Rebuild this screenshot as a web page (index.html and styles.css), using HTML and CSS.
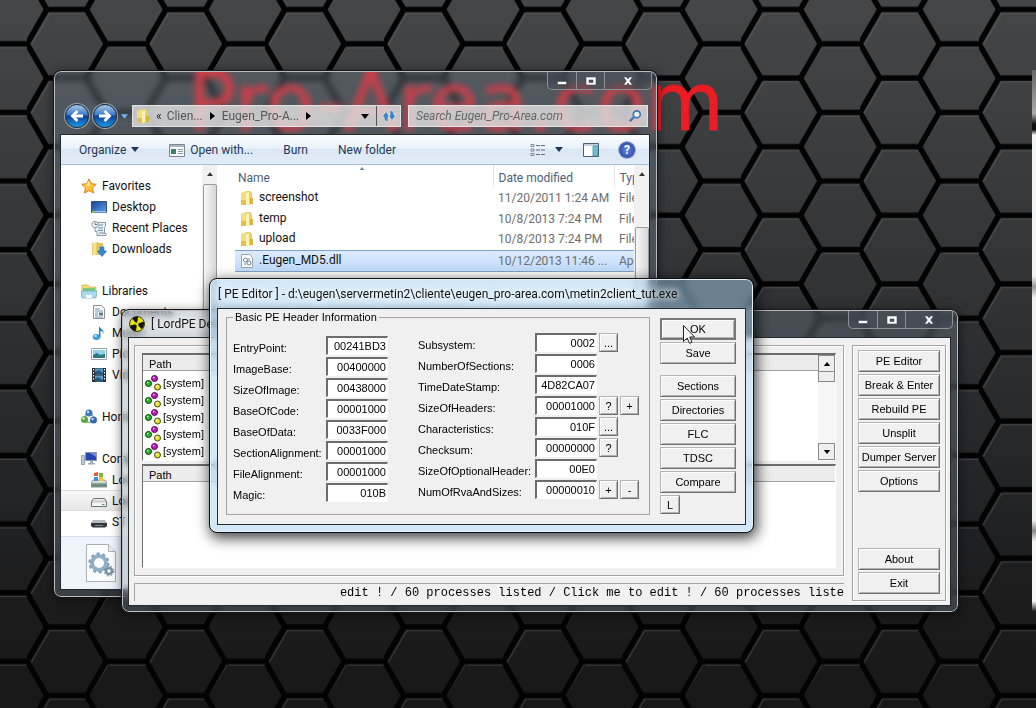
FILE: index.html
```html
<!doctype html>
<html lang="en">
  <head>
    <meta charset="UTF-8" />
    <meta name="viewport" content="width=device-width, initial-scale=1.0" />
    <title>Desktop</title>
    <link rel="stylesheet" href="styles.css">
  </head>
  <body>
    <!-- Icon definitions -->
    <svg class="defs" aria-hidden="true">
      <defs>
        <linearGradient id="gold" x1="0" x2="1"><stop offset="0" stop-color="#e8c95a" /><stop offset=".45" stop-color="#fbeb9c" /><stop offset="1" stop-color="#dcb945" /></linearGradient>
        <linearGradient id="metal" x1="0" x2="0" y1="0" y2="1"><stop offset="0" stop-color="#f4f4f4" /><stop offset="1" stop-color="#8d9296" /></linearGradient>
        <linearGradient id="sky" x1="0" x2="1" y1="0" y2="1"><stop offset="0" stop-color="#1c3f9c" /><stop offset="1" stop-color="#5aa4e6" /></linearGradient>
      </defs>
      <symbol id="folder" viewBox="0 0 16 16">
        <path d="M2 3l5-2v12l-5 2z" fill="#f3dd7c" />
        <path d="M7 1h4l2 2v11l-6 1z" fill="#e9cf6a" />
        <path d="M7 3l3-1v12l-3 1z" fill="#fdf3b4" />
        <path d="M2 10h5v5H2z" fill="#e3c04e" />
        <path d="M11 8h3v6h-3z" fill="#d9b540" />
      </symbol>
      <symbol id="dll" viewBox="0 0 16 16">
        <path d="M2.500 1.500h8l3 3v10h-11z" fill="#fff" stroke="#9aa3ab" />
        <g fill="none" stroke="#5f7f9a"><circle cx="6.500" cy="7" r="2" /><circle cx="10" cy="10" r="2" /><path d="M5 11h2M9 6h2" /></g>
      </symbol>
      <symbol id="star" viewBox="0 0 16 16">
        <path d="M8 1l2.200 4.700 5 .6-3.700 3.500 1 5.200L8 12.500 3.500 15l1-5.200L.8 6.300l5-.6z" fill="#ffc23c" stroke="#e07c16" />
        <path d="M8 3l1.300 3.500L8 8 5 7z" fill="#fff0a8" />
      </symbol>
      <symbol id="screen" viewBox="0 0 16 16">
        <path d="M.5 2.500h15v11H.5z" fill="url(#sky)" stroke="#36507c" />
        <path d="M1 12h14v1.500H1z" fill="#9cc6ee" /><path d="M1 12h3v1.500H1z" fill="#8fd25a" />
      </symbol>
      <symbol id="recent" viewBox="0 0 16 16">
        <path d="M5.500 2.500h9v4l-1 1v6H15v2H6v-4H4v-4h1.500z" fill="#e9eff4" stroke="#8899a8" />
        <path d="M7 5h5M7 8h5M7 10.500h5M8 13h5" stroke="#6f8fae" />
        <circle cx="4" cy="4.500" r="3.200" fill="#f7f9fb" stroke="#8b97a3" /><path d="M4 2.500v2h2" fill="none" stroke="#5c6b7a" />
      </symbol>
      <symbol id="download" viewBox="0 0 16 16">
        <path d="M1 2l6-1v13H1z" fill="url(#gold)" /><path d="M7 2h5v12H7z" fill="#e0c258" />
        <path d="M9 6h4v4h2.500L11 15.500 6.500 10H9z" fill="#2f8bd8" stroke="#1767ad" stroke-width=".6" />
      </symbol>
      <symbol id="library" viewBox="0 0 16 16">
        <path d="M1 2h6l1 2h7v9H1z" fill="#f1d97c" stroke="#c6a648" stroke-width=".6" />
        <path d="M2 5h12v4H2z" fill="#7cc87a" /><path d="M0 8h16l-1 7H1z" fill="#a9d8ef" stroke="#62a3c4" stroke-width=".6" />
        <path d="M5 15v-3h6v3z" fill="#f8fcff" />
      </symbol>
      <symbol id="document" viewBox="0 0 16 16">
        <path d="M2.500 1.500h8l3 3v10h-11z" fill="#fdfdfd" stroke="#8a8f94" />
        <path d="M4 5h5M4 7h8M4 9h3M4 11h3M4 13h8" stroke="#7894ad" /><path d="M8 8.500h4v3H8z" fill="#5f7c94" />
      </symbol>
      <symbol id="music" viewBox="0 0 16 16">
        <ellipse cx="5.500" cy="12" rx="3.800" ry="3" fill="#3c9cdc" /><path d="M8 12V1c1 3 5 3 4.500 8C12 6.500 10 6 9.500 6v6z" fill="#2684c9" />
        <ellipse cx="4.500" cy="11" rx="1.500" ry="1" fill="#bfe4fa" />
      </symbol>
      <symbol id="picture" viewBox="0 0 16 16">
        <path d="M.5 2.500h15v11H.5z" fill="#fff" stroke="#9aa3ab" /><path d="M2 4h12v8H2z" fill="#8fd0ea" />
        <path d="M2 9l4-2 3 2 5-1v4H2z" fill="#2c7782" />
      </symbol>
      <symbol id="video" viewBox="0 0 16 16">
        <path d="M1 1h14v14H1z" fill="#2b3136" /><path d="M4 1.500h8v6H4zM4 8.500h8v6H4z" fill="#5c9ccb" />
        <path d="M4 5l4-2 4 3v1.500H4zM4 12l3-2 5 3v1.500H4z" fill="#27587b" />
        <path d="M2.500 2v12M13.500 2v12" stroke="#fff" stroke-dasharray="1.500 1.500" />
      </symbol>
      <symbol id="homegroup" viewBox="0 0 16 16">
        <circle cx="8" cy="9" r="4.500" fill="none" stroke="#8ec66c" stroke-width="1.500" />
        <circle cx="8" cy="4" r="3.500" fill="#3d74c4" /><circle cx="3.500" cy="10.500" r="3.500" fill="#5ba33f" /><circle cx="12.500" cy="11" r="3.500" fill="#3568b8" />
        <circle cx="7" cy="3" r="1.200" fill="#cfe4fb" /><circle cx="2.500" cy="9.500" r="1.200" fill="#dff3cf" /><circle cx="11.500" cy="10" r="1.200" fill="#cfe4fb" />
      </symbol>
      <symbol id="computer" viewBox="0 0 16 16">
        <path d="M4.500 1.500h11v8h-11z" fill="#2843b5" stroke="#8b97a3" /><path d="M9 2h6v4z" fill="#6e8be4" />
        <path d="M9 10h3v2h2v1.500H7V12h2z" fill="#a4acb4" /><path d="M.5 4.500h3v9h-3z" fill="#c3cad2" stroke="#7d8790" stroke-width=".7" />
      </symbol>
      <symbol id="osdrive" viewBox="0 0 16 16">
        <path d="M2 8h12l2 3v4H0v-4z" fill="url(#metal)" stroke="#5d6f6a" stroke-width=".7" /><path d="M1 11.500h14v2.500H1z" fill="#68907c" />
        <path d="M3 1l4-1v4H3z" fill="#e25b2e" /><path d="M8 1h4v4H8z" fill="#7fb83c" /><path d="M3 5h4v4H3z" fill="#3f90d2" /><path d="M8 5h4v4H8z" fill="#f3c43a" />
      </symbol>
      <symbol id="drive" viewBox="0 0 16 16">
        <path d="M2.500 5.500h11l2 3.500v4.500H.5V9z" fill="url(#metal)" stroke="#6d7276" /><path d="M1 9.500h14v3.500H1z" fill="#f4f5f5" /><path d="M11 11h2.500v1H11z" fill="#4f9c3a" />
      </symbol>
      <symbol id="usb" viewBox="0 0 16 16">
        <path d="M2 6h12l2 3H0z" fill="#b5b9bc" /><path d="M0 9h16v3l-2 1.500H2L0 12z" fill="#33373a" /><path d="M4 11h8v1H4z" fill="#85898c" />
      </symbol>
      <symbol id="radiation" viewBox="0 0 16 16">
        <circle cx="8" cy="8" r="7.500" fill="#e6e11c" stroke="#3b3a0c" />
        <path d="M8 8L3 2.500A7 7 0 0 1 9 1zM8 8l6.700-2.500A7 7 0 0 1 12.500 13zM8 8l-1 7a7 7 0 0 1-6-5.500z" fill="#141404" />
        <circle cx="8" cy="8" r="1.500" fill="#e6e11c" />
      </symbol>
      <symbol id="process" viewBox="0 0 16 16">
        <circle cx="9.500" cy="3.500" r="3" fill="#c018c0" stroke="#4a064a" /><circle cx="3.500" cy="8.500" r="3" fill="#28b428" stroke="#083c08" /><circle cx="12.500" cy="12" r="3" fill="#e4e02c" stroke="#4b4a08" />
        <g fill="#fff"><circle cx="8.700" cy="2.600" r=".8" /><circle cx="2.700" cy="7.600" r=".8" /><circle cx="11.700" cy="11" r=".8" /></g>
      </symbol>
      <symbol id="min" viewBox="0 0 12 10"><path d="M1.500 5.500h9v3h-9z" fill="#fff" stroke="#444b52" stroke-width=".6" /></symbol>
      <symbol id="max" viewBox="0 0 12 10"><path d="M1 1h10v8H1zM4 4v2.500h4V4z" fill="#fff" fill-rule="evenodd" stroke="#444b52" stroke-width=".6" /></symbol>
      <symbol id="close" viewBox="0 0 12 10"><path d="M1.500 1h3L6 3l1.500-2h3L7.700 5l2.800 4h-3L6 7 4.500 9h-3l2.800-4z" fill="#fff" stroke="#444b52" stroke-width=".6" /></symbol>
      <symbol id="down" viewBox="0 0 8 5"><path d="M0 0h8L4 5z" fill="currentColor" /></symbol>
      <symbol id="up" viewBox="0 0 8 5"><path d="M0 5h8L4 0z" fill="currentColor" /></symbol>
      <symbol id="right" viewBox="0 0 5 8"><path d="M0 0v8l5-4z" fill="currentColor" /></symbol>
    </svg>

    <main class="desktop">
      <svg class="wallpaper" aria-hidden="true">
        <defs>
          <pattern id="honeycomb" x="27" y="9.500" width="119" height="68.600" patternUnits="userSpaceOnUse">
            <path d="M3.300 34.300L21.800 2.800H58M82 37.300h35M62 66l18-29" transform="translate(1 1)" fill="none" stroke="#707274" stroke-opacity=".4" />
            <path d="M0 34.300L19.800 0H59.500L79.300 34.300H119M79.300 34.300L59.500 68.600H19.800L0 34.300M19.800 68.600H59.500" fill="none" stroke="#030303" stroke-width="5.500" />
          </pattern>
        </defs>
        <rect width="100%" height="100%" fill="url(#honeycomb)" />
      </svg>
      <p class="watermark">Pro-Area.com</p>
      <div class="edge"></div>

      <section class="window explorer">
        <div class="caption-buttons">
          <button type="button" aria-label="Minimize"><svg><use href="#min" /></svg></button>
          <button type="button" aria-label="Maximize"><svg><use href="#max" /></svg></button>
          <button type="button" class="close" aria-label="Close"><svg><use href="#close" /></svg></button>
        </div>

        <div class="address-row">
          <button type="button" class="nav" aria-label="Back"><svg viewBox="0 0 16 16"><path d="M8.500 3L3.500 8l5 5M4 8h10" fill="none" stroke="#fff" stroke-width="2.800" /></svg></button>
          <button type="button" class="nav" aria-label="Forward"><svg viewBox="0 0 16 16"><path d="M7.500 3l5 5-5 5M12 8H2" fill="none" stroke="#fff" stroke-width="2.800" /></svg></button>
          <button type="button" class="history" aria-label="Recent pages"><svg><use href="#down" /></svg></button>
          <div class="address">
            <svg class="icon"><use href="#folder" /></svg>
            <span class="more">«</span>
            <a href="#">Clien...</a>
            <svg class="crumb"><use href="#right" /></svg>
            <a href="#">Eugen_Pro-A...</a>
            <svg class="crumb"><use href="#right" /></svg>
            <svg class="arrow"><use href="#down" /></svg>
            <button type="button" class="refresh" aria-label="Refresh">
              <svg viewBox="0 0 16 16"><path d="M7 14V9h2L5 3.500 1 9h2c0 3 1 4 4 5zM9 2v5H7l4 5.500L15 7h-2c0-3-1-4-4-5z" fill="#3f83bd" stroke="#e9f3fb" stroke-width=".6" /></svg>
            </button>
          </div>
          <div class="search">
            <input type="text" aria-label="Search" placeholder="Search Eugen_Pro-Area.com" />
            <svg viewBox="0 0 16 16"><circle cx="10" cy="6" r="4" fill="#e8f2fa" stroke="#3a78b4" stroke-width="2" /><path d="M7 9l-5 5" stroke="#3a78b4" stroke-width="2.500" /></svg>
          </div>
        </div>

        <div class="client">
          <div class="toolbar">
            <button type="button">Organize <svg class="arrow"><use href="#down" /></svg></button>
            <button type="button">
              <svg class="icon" viewBox="0 0 16 16"><path d="M.5 2.500h15v12H.5z" fill="#f6f8fa" stroke="#7b8791" /><path d="M1 3h14v2H1z" fill="#aab6c1" /><path d="M2 7h5v5H2z" fill="#3f7f6d" /><path d="M9 7.500h5M9 9.500h5M9 11.500h5" stroke="#8d98a2" /></svg>
              Open with...
            </button>
            <button type="button">Burn</button>
            <button type="button">New folder</button>
            <span class="spacer"></span>
            <button type="button" aria-label="Change your view">
              <svg class="icon" viewBox="0 0 16 16"><path d="M1 2.500h3v2H1zM1 7h3v2H1zM1 11.500h3v2H1z" fill="#fff" stroke="#7b8791" /><path d="M6 3.500h4M11 3.500h4M6 8h4M11 8h4M6 12.500h4M11 12.500h4" stroke="#5e6f80" /></svg>
              <svg class="arrow"><use href="#down" /></svg>
            </button>
            <button type="button" aria-label="Preview pane">
              <svg class="icon" viewBox="0 0 16 16"><path d="M.5 1.500h15v13H.5z" fill="#fff" stroke="#4c5f73" /><path d="M1 2h14v2H1z" fill="#c2d2e2" /><path d="M10 4h5v10h-5z" fill="#6cc3cf" stroke="#3b8492" stroke-width=".7" /></svg>
            </button>
            <button type="button" class="help" aria-label="Help">?</button>
          </div>

          <div class="panes">
            <nav class="tree">
              <ul>
                <li><a href="#" class="root"><svg class="icon"><use href="#star" /></svg>Favorites</a></li>
                <li><a href="#"><svg class="icon"><use href="#screen" /></svg>Desktop</a></li>
                <li><a href="#"><svg class="icon"><use href="#recent" /></svg>Recent Places</a></li>
                <li><a href="#"><svg class="icon"><use href="#download" /></svg>Downloads</a></li>
              </ul>
              <ul>
                <li><a href="#" class="root"><svg class="icon"><use href="#library" /></svg>Libraries</a></li>
                <li><a href="#"><svg class="icon"><use href="#document" /></svg>Documents</a></li>
                <li><a href="#"><svg class="icon"><use href="#music" /></svg>Music</a></li>
                <li><a href="#"><svg class="icon"><use href="#picture" /></svg>Pictures</a></li>
                <li><a href="#"><svg class="icon"><use href="#video" /></svg>Videos</a></li>
              </ul>
              <ul>
                <li><a href="#" class="root"><svg class="icon"><use href="#homegroup" /></svg>Homegroup</a></li>
              </ul>
              <ul>
                <li><a href="#" class="root"><svg class="icon"><use href="#computer" /></svg>Computer</a></li>
                <li><a href="#"><svg class="icon"><use href="#osdrive" /></svg>Local Disk</a></li>
                <li><a href="#" class="current"><svg class="icon"><use href="#drive" /></svg>Local Disk</a></li>
                <li><a href="#"><svg class="icon"><use href="#usb" /></svg>ST</a></li>
              </ul>
            </nav>
            <div class="scroll tree-scroll"><svg><use href="#up" /></svg><i></i></div>
            <div class="files">
              <svg class="sort"><use href="#up" /></svg>
              <table>
                <thead>
                  <tr><th class="name">Name</th><th class="date">Date modified</th><th>Type</th></tr>
                </thead>
                <tbody>
                  <tr><td><svg class="icon"><use href="#folder" /></svg>screenshot</td><td>11/20/2011 1:24 AM</td><td>File folder</td></tr>
                  <tr><td><svg class="icon"><use href="#folder" /></svg>temp</td><td>10/8/2013 7:24 PM</td><td>File folder</td></tr>
                  <tr><td><svg class="icon"><use href="#folder" /></svg>upload</td><td>10/8/2013 7:24 PM</td><td>File folder</td></tr>
                  <tr class="selected"><td><svg class="icon"><use href="#dll" /></svg>.Eugen_MD5.dll</td><td>10/12/2013 11:46 ...</td><td>Application</td></tr>
                </tbody>
              </table>
            </div>
            <div class="scroll files-scroll"><svg><use href="#up" /></svg><i></i></div>
          </div>

          <div class="details">
            <svg viewBox="0 0 32 40">
              <path d="M1.500 1.500h22l7 7v30h-29z" fill="#fbfcfd" stroke="#a9b0b6" /><path d="M23.500 1.500v7h7" fill="#e8ecef" stroke="#a9b0b6" />
              <circle cx="14" cy="20" r="7" fill="none" stroke="#8fb0c6" stroke-width="4" /><circle cx="14" cy="20" r="9.500" fill="none" stroke="#7d9ab0" stroke-width="2" stroke-dasharray="3 3" />
              <circle cx="24" cy="28" r="3" fill="none" stroke="#76909f" stroke-width="2.500" /><circle cx="24" cy="28" r="5" fill="none" stroke="#6f8798" stroke-dasharray="2 2" />
            </svg>
          </div>
        </div>
      </section>

      <section class="window lordpe">
        <div class="caption-buttons">
          <button type="button" aria-label="Minimize"><svg><use href="#min" /></svg></button>
          <button type="button" aria-label="Maximize"><svg><use href="#max" /></svg></button>
          <button type="button" class="close" aria-label="Close"><svg><use href="#close" /></svg></button>
        </div>
        <h2 class="title"><svg class="icon"><use href="#radiation" /></svg>[ LordPE Deluxe ]</h2>
        <div class="client">
          <div class="main">
            <div class="group lists">
              <div class="list processes">
                <div class="rows">
                  <div class="head">Path</div>
                  <ul>
                    <li><svg><use href="#process" /></svg>[system]</li>
                    <li><svg><use href="#process" /></svg>[system]</li>
                    <li><svg><use href="#process" /></svg>[system]</li>
                    <li><svg><use href="#process" /></svg>[system]</li>
                    <li><svg><use href="#process" /></svg>[system]</li>
                  </ul>
                </div>
                <div class="classic-scroll">
                  <button type="button" aria-label="Scroll up"><svg><use href="#up" /></svg></button>
                  <i></i>
                  <button type="button" aria-label="Scroll down"><svg><use href="#down" /></svg></button>
                </div>
              </div>
              <div class="list modules"><div class="rows"><div class="head">Path</div></div></div>
            </div>
            <div class="ticker"><span>edit ! / 60 processes listed / Click me to edit ! / 60 processes liste</span></div>
          </div>
          <div class="group actions">
            <button type="button">PE Editor</button>
            <button type="button">Break &amp; Enter</button>
            <button type="button">Rebuild PE</button>
            <button type="button">Unsplit</button>
            <button type="button">Dumper Server</button>
            <button type="button">Options</button>
            <span class="spacer"></span>
            <button type="button">About</button>
            <button type="button">Exit</button>
          </div>
        </div>
      </section>

      <section class="window editor">
        <h2 class="title">[ PE Editor ] - d:\eugen\servermetin2\cliente\eugen_pro-area.com\metin2client_tut.exe</h2>
        <form class="client">
          <fieldset>
            <legend>Basic PE Header Information</legend>
            <div class="fields left">
              <label for="entry">EntryPoint:</label><input id="entry" type="text" value="00241BD3" />
              <label for="base">ImageBase:</label><input id="base" type="text" value="00400000" />
              <label for="size">SizeOfImage:</label><input id="size" type="text" value="00438000" />
              <label for="code">BaseOfCode:</label><input id="code" type="text" value="00001000" />
              <label for="data">BaseOfData:</label><input id="data" type="text" value="0033F000" />
              <label for="salign">SectionAlignment:</label><input id="salign" type="text" value="00001000" />
              <label for="falign">FileAlignment:</label><input id="falign" type="text" value="00001000" />
              <label for="magic">Magic:</label><input id="magic" type="text" value="010B" />
            </div>
            <div class="fields right">
              <label for="subsystem">Subsystem:</label><div><input id="subsystem" type="text" value="0002" /><button type="button">...</button></div>
              <label for="sections">NumberOfSections:</label><div><input id="sections" type="text" value="0006" /></div>
              <label for="stamp">TimeDateStamp:</label><div><input id="stamp" type="text" value="4D82CA07" /></div>
              <label for="headers">SizeOfHeaders:</label><div><input id="headers" type="text" value="00001000" /><button type="button">?</button><button type="button">+</button></div>
              <label for="chars">Characteristics:</label><div><input id="chars" type="text" value="010F" /><button type="button">...</button></div>
              <label for="checksum">Checksum:</label><div><input id="checksum" type="text" value="00000000" /><button type="button">?</button></div>
              <label for="optional">SizeOfOptionalHeader:</label><div><input id="optional" type="text" value="00E0" /></div>
              <label for="rva">NumOfRvaAndSizes:</label><div><input id="rva" type="text" value="00000010" /><button type="button">+</button><button type="button">-</button></div>
            </div>
          </fieldset>
          <div class="side">
            <button type="button" class="default">OK</button>
            <button type="button">Save</button>
            <button type="button" class="apart">Sections</button>
            <button type="button">Directories</button>
            <button type="button">FLC</button>
            <button type="button">TDSC</button>
            <button type="button">Compare</button>
            <button type="button" class="small">L</button>
          </div>
        </form>
      </section>

      <svg class="cursor" viewBox="0 0 12 19" aria-hidden="true"><path d="M.5.5v16l3.700-3.500 2.300 5.300 2.500-1-2.300-5.300h4.800z" fill="#fff" stroke="#222" /></svg>
    </main>
  </body>
</html>
```
FILE: styles.css
```css
*,
*:before,
*:after {
  box-sizing: border-box;
}

body {
  margin: 0;
  color: #111;
  font: 12px Roboto, 'Open Sans', sans-serif;
}

h2,
p,
ul {
  margin: 0;
  padding: 0;
  font-weight: normal;
  list-style: none;
}

a {
  color: inherit;
  text-decoration: none;
}

button {
  padding: 0;
  border: 0;
  background: none;
  color: inherit;
  font: inherit;
}

svg {
  flex: none;
}

.defs {
  position: absolute;
  width: 0;
  height: 0;
}

.icon {
  width: 16px;
  height: 16px;
}

.arrow {
  width: 8px;
  height: 5px;
}

.spacer {
  flex: 1;
}

/* Desktop */
.desktop {
  position: relative;
  height: 100vh;
  overflow: hidden;
  background: linear-gradient(#444648, #313335 40%, #1c1c1d 85%, #181819);
}

.wallpaper {
  position: absolute;
  inset: 0;
  width: 100%;
  height: 100%;
}

.watermark {
  position: absolute;
  top: 58px;
  left: 188px;
  color: #ea1c24;
  font: 80px/90px 'DejaVu Sans', sans-serif;
  -webkit-text-stroke: 1px #ea1c24;
}

.edge {
  position: absolute;
  top: 70px;
  right: 0;
  width: 4px;
  height: 542px;
  background: linear-gradient(#666, #aaa 8%, #111 10% 11%, #f4f4f4 12% 38%, #999 40%, #f2f2f2 42% 83%, #888 85%, #f6f6f6 87% 98%, #111);
}

/* Glass windows */
.window {
  display: flex;
  position: absolute;
  flex-direction: column;
  padding: 0 6px 6px 5px;
  border: 1px solid #b9bdc1;
  border-radius: 7px;
  outline: 1px solid #16181a;
  background: rgb(125 140 155 / 32%);
  box-shadow: 0 2px 12px rgb(0 0 0 / 60%);
  backdrop-filter: blur(3px);
}

.client {
  border: 1px solid #222a30;
}

.caption-buttons {
  display: flex;
  position: absolute;
  top: 0;
  right: 4px;
  height: 18px;
  border: 1px solid #8b9196;
  border-top: 0;
  border-radius: 0 0 5px 5px;
  background: rgb(70 78 86 / 50%);

  button {
    display: grid;
    place-items: center;
    width: 28px;

    & + button {
      border-left: 1px solid #8b9196;
    }
  }

  .close {
    width: 47px;
  }

  svg {
    width: 12px;
    height: 10px;
  }
}

.title {
  display: flex;
  align-items: center;
  height: 26px;
  gap: 6px;
  font-size: 12px;
  white-space: pre;
  text-shadow: 0 0 6px #fff, 0 0 10px #fff;
}

/* Explorer */
.explorer {
  top: 71px;
  left: 54px;
  width: 603px;
  height: 526px;

  .client {
    display: flex;
    flex: 1;
    flex-direction: column;
    min-height: 0;
    background: #fff;
  }
}

.address-row {
  display: flex;
  align-items: center;
  height: 62px;
  padding: 26px 2px 0 5px;
}

.nav {
  display: grid;
  place-items: center;
  width: 24px;
  height: 24px;
  margin-right: 4px;
  border: 1px solid #20304a;
  border-radius: 50%;
  background: linear-gradient(#a9c8ea, #3d78c4 45%, #0d3f95 50%, #1b9be6);
  box-shadow: 0 0 0 1px #9aa8b5;

  svg {
    width: 16px;
    height: 16px;
  }
}

.history {
  width: 11px;
  color: #6fb6ea;

  svg {
    display: block;
    width: 7px;
    height: 5px;
  }
}

.address,
.search {
  display: flex;
  align-items: center;
  height: 22px;
  border: 1px solid #e4e4e4;
  background: rgb(228 228 228 / 80%);
  color: #555;
}

.address {
  width: 269px;
  padding-left: 2px;

  .more {
    margin: 0 5px;
    color: #222;
  }

  .crumb {
    width: 5px;
    height: 8px;
    margin: 0 7px;
    color: #000;
  }

  .arrow {
    margin: 0 7px 0 auto;
    color: #000;
  }
}

.refresh {
  display: grid;
  place-items: center;
  align-self: stretch;
  width: 24px;
  border-left: 1px solid #555;

  svg {
    width: 16px;
    height: 16px;
  }
}

.search {
  flex: 1;
  margin-left: 7px;
  padding: 0 5px 0 7px;

  input {
    flex: 1;
    min-width: 0;
    padding: 0;
    border: 0;
    outline: none;
    background: none;
    font: inherit;
    font-style: italic;
  }

  ::placeholder {
    color: #666;
  }

  svg {
    width: 14px;
    height: 14px;
  }
}

.toolbar {
  display: flex;
  align-items: center;
  height: 30px;
  padding: 0 14px 0 18px;
  gap: 30px;
  border-bottom: 1px solid #a9bfd8;
  background: linear-gradient(#fbfdff, #eaf2fb 45%, #dbe7f4 50%, #e2ecf8);
  color: #1e395b;

  button {
    display: flex;
    align-items: center;
    gap: 5px;
  }

  .spacer {
    margin: 0 -30px;
  }

  button:nth-last-child(3) {
    gap: 9px;
  }

  button:nth-last-child(-n + 2) {
    margin-left: -10px;
  }

  .help {
    justify-content: center;
    width: 16px;
    height: 16px;
    border-radius: 50%;
    background: radial-gradient(#5f83dc, #1f3c9c);
    box-shadow: 0 0 0 1px #98a8c8;
    color: #fff;
    font-weight: bold;
  }
}

.panes {
  display: flex;
  flex: 1;
  min-height: 0;
}

.tree {
  width: 141px;
  padding-top: 10px;
  overflow: hidden;

  ul + ul {
    margin-top: 21px;
  }

  a {
    display: flex;
    align-items: center;
    height: 21px;
    padding-left: 30px;
    gap: 5px;
    white-space: nowrap;
  }

  .root {
    padding-left: 20px;
  }

  .current {
    border-block: 1px solid #ddd;
    background: linear-gradient(#f8f8f8, #e6e6e6);
  }
}

.scroll {
  display: flex;
  flex-direction: column;
  align-items: center;
  width: 15px;
  padding-top: 7px;
  background: #f1f1f1;

  svg {
    width: 6px;
    height: 4px;
    color: #333;
  }

  i {
    width: 14px;
    margin-top: 8px;
    border: 1px solid #9b9b9b;
    border-radius: 2px;
    background: linear-gradient(90deg, #f7f7f7, #d6d7da);
  }
}

.tree-scroll i {
  height: 290px;
}

.files-scroll i {
  height: 160px;
  margin-top: 51px;
}

.files {
  position: relative;
  flex: 1;
  min-width: 0;
  padding-left: 18px;
  overflow: hidden;

  .sort {
    position: absolute;
    top: 2px;
    left: 142px;
    width: 6px;
    height: 3px;
    color: #6a87a8;
  }

  table {
    width: 100%;
    border-collapse: collapse;
    table-layout: fixed;
  }

  th {
    height: 22px;
    padding: 4px 0 0 3px;
    border-right: 1px solid #e2e6ea;
    color: #4c607a;
    font-weight: normal;
    text-align: left;

    &:last-child {
      border-right: 0;
    }

    & + th {
      padding-left: 5px;
    }
  }

  .name {
    width: 258px;
  }

  .date {
    width: 121px;
  }

  td {
    height: 21px;
    padding: 0 0 0 5px;
    overflow: hidden;
    color: #6d6d6d;
    white-space: nowrap;

    &:first-child {
      padding-left: 4px;
      color: #111;
    }
  }

  td .icon {
    margin-right: 4px;
    vertical-align: middle;
  }

  .selected td {
    border-block: 1px solid #7da2ce;
    background: linear-gradient(#dcebfc, #c1dbfc);
  }
}

.details {
  height: 53px;
  padding: 6px 24px;
  border-top: 1px solid #d5dfeb;
  background: #eff4fb;

  svg {
    width: 32px;
    height: 40px;
  }
}

/* LordPE */
.lordpe {
  top: 310px;
  left: 122px;
  width: 836px;
  height: 302px;
  padding-bottom: 5px;

  .icon {
    margin-left: 1px;
  }

  .client {
    display: flex;
    flex: 1;
    min-height: 0;
    padding: 7px 4px 4px 5px;
    gap: 8px;
  }
}

.lordpe .client,
.editor .client {
  background: #f0f0f0;
  color: #000;
  font: 11px 'Liberation Sans', sans-serif;
}

.group {
  border: 1px solid #a3a3a3;
  box-shadow: inset 1px 1px #fff, 1px 1px #fff;
}

.main {
  display: flex;
  flex: 1;
  flex-direction: column;
  min-width: 0;
  gap: 7px;
}

.lists {
  display: flex;
  flex: 1;
  flex-direction: column;
  min-height: 0;
  padding: 7px;
  gap: 3px;
}

.list {
  display: flex;
  border: solid #fff;
  border-width: 1px;
  border-top: 2px solid #6d6d6d;
  border-left-color: #6d6d6d;
  background: #fff;
}

.processes {
  height: 108px;
}

.modules {
  flex: 1;
}

.rows {
  flex: 1;

  .head {
    height: 16px;
    padding-left: 6px;
    border-bottom: 1px solid #a0a0a0;
    background: #ececec;
    line-height: 18px;
  }

  ul {
    padding-top: 3px;
  }

  li {
    display: flex;
    align-items: center;
    height: 17px;
    padding-left: 2px;
    gap: 2px;
  }

  li svg {
    width: 16px;
    height: 16px;
  }
}

.classic-scroll {
  display: flex;
  flex-direction: column;
  justify-content: space-between;
  width: 17px;
  background: #f6f6f6;

  button {
    display: grid;
    place-items: center;
    height: 17px;
    border: 1px solid #8a8a8a;
    background: #efefef;
  }

  i {
    height: 10px;
    margin-bottom: auto;
    border: 1px solid #8a8a8a;
    border-top: 0;
    background: #efefef;
  }

  svg {
    width: 8px;
    height: 4px;
  }
}

.ticker {
  display: flex;
  justify-content: flex-end;
  height: 18px;
  border: solid #a3a3a3;
  border-width: 1px 0 0 1px;
  overflow: hidden;
  font: 12px/18px 'Liberation Mono', monospace;
  white-space: pre;
}

.actions {
  display: flex;
  flex-direction: column;
  width: 94px;
  padding: 4px 5px 6px;
  gap: 2px;
}

.actions button,
.editor button {
  height: 22px;
  border: 1px solid;
  border-color: #b4b4b4 #707070 #707070 #b4b4b4;
  background: #f0f0f0;
  box-shadow: inset 1px 1px #fff, inset -1px -1px #b0b0b0;
}

/* PE Editor */
.editor {
  top: 279px;
  left: 210px;
  width: 543px;
  height: 253px;
  padding-left: 6px;
  border-color: #e3f1fb;
  outline-color: #111;
  background: rgb(165 208 240 / 50%);
  box-shadow: 2px 4px 14px 2px rgb(0 0 0 / 75%);

  .title {
    height: 28px;
    padding-left: 1px;
    gap: 0;
  }

  .client {
    display: flex;
    flex: 1;
    align-items: flex-start;
    padding: 2px 9px 9px 8px;
    gap: 10px;
  }

  fieldset {
    display: flex;
    flex: 1;
    align-items: flex-start;
    height: 204px;
    margin: 0;
    padding: 0 10px 0 6px;
    gap: 30px;
    border: 1px solid #a8a49c;
    box-shadow: none;
  }

  legend {
    padding: 0 2px;
  }

  input {
    width: 62px;
    height: 19px;
    padding: 0 1px;
    border: 1px solid #fff;
    border-top: 2px solid #6c6c6c;
    border-left: 2px solid #6c6c6c;
    background: #fff;
    font: inherit;
    text-align: right;
  }
}

.fields {
  display: grid;
  grid-auto-rows: 21px;
  align-items: center;

  label {
    padding-top: 4px;
    white-space: nowrap;
  }
}

.left {
  grid-template-columns: 93px 62px;
  padding-top: 12px;
}

.right {
  grid-template-columns: 117px 1fr;
  padding-top: 9px;

  div {
    display: flex;
    gap: 2px;
  }

  button {
    width: 19px;
    height: 19px;
  }
}

.side {
  display: flex;
  flex-direction: column;
  width: 76px;
  padding-top: 7px;
  gap: 2px;

  .default {
    border: 2px solid #777;
  }

  .apart {
    margin-top: 9px;
  }

  .small {
    width: 20px;
    height: 19px;
  }
}

.cursor {
  position: absolute;
  top: 325px;
  left: 683px;
  width: 12px;
  height: 19px;
}
```
